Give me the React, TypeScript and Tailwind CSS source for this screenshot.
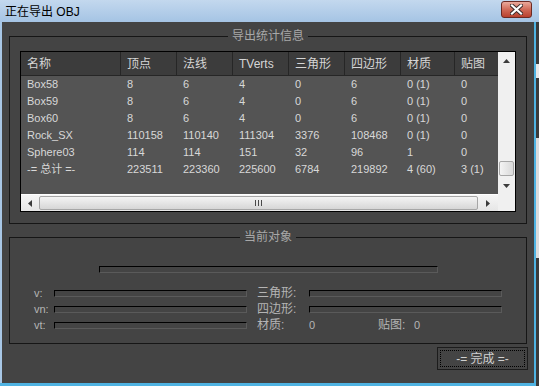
import React from "react";

const FONT = "font-['Liberation_Sans','Noto_Sans_CJK_SC',sans-serif]";

const headers = ["名称", "顶点", "法线", "TVerts", "三角形", "四边形", "材质", "贴图"];
const widths = ["w-[100px]", "w-[56px]", "w-[56px]", "w-[56px]", "w-[56px]", "w-[56px]", "w-[54px]", "w-[43px]"];
const rows = [
  ["Box58", "8", "6", "4", "0", "6", "0 (1)", "0"],
  ["Box59", "8", "6", "4", "0", "6", "0 (1)", "0"],
  ["Box60", "8", "6", "4", "0", "6", "0 (1)", "0"],
  ["Rock_SX", "110158", "110140", "111304", "3376", "108468", "0 (1)", "0"],
  ["Sphere03", "114", "114", "151", "32", "96", "1", "0"],
  ["-= 总计 =-", "223511", "223360", "225600", "6784", "219892", "4 (60)", "3 (1)"],
];

function Tri({ dir }: { dir: "up" | "down" | "left" | "right" }) {
  const pts =
    dir === "up"
      ? "0,4 7,4 3.5,0"
      : dir === "down"
      ? "0,0 7,0 3.5,4"
      : dir === "left"
      ? "4,0 4,7 0,3.5"
      : "0,0 0,7 4,3.5";
  const w = dir === "up" || dir === "down" ? 7 : 4;
  const h = dir === "up" || dir === "down" ? 4 : 7;
  return (
    <svg width={w} height={h} viewBox={`0 0 ${w} ${h}`}>
      <polygon points={pts} fill="#3c3c3c" />
    </svg>
  );
}

function Sunken({ w }: { w: string }) {
  return <div className={`${w} h-[7px] border border-t-black border-l-black border-r-[#5a5a5a] border-b-[#5a5a5a] bg-[#444]`} />;
}

export default function App() {
  return (
    <div className={`w-[539px] h-[386px] overflow-hidden flex ${FONT}`}>
      <div className="w-[536px] h-[386px] flex flex-col shrink-0">
        {/* title bar */}
        <div className="h-[22px] flex items-center bg-gradient-to-b from-[#c3d8ee] to-[#a5c4e4] pl-[5px] pr-[4px]">
          <span className="text-[12px] leading-[16px] text-black mt-[1px]">正在导出 OBJ</span>
          <div className="ml-auto mb-[3px] w-[31px] h-[17px] rounded-[3px] border border-[#6b2a24] bg-gradient-to-b from-[#e9a99c] via-[#d06a58] to-[#b8402e] flex items-center justify-center">
            <svg width="13" height="11" viewBox="0 0 13 11">
              <path d="M2 1.5 L11 9.5 M11 1.5 L2 9.5" stroke="#3a2a2a" strokeWidth="4" strokeLinecap="square" />
              <path d="M2 1.5 L11 9.5 M11 1.5 L2 9.5" stroke="#ffffff" strokeWidth="2.2" strokeLinecap="square" />
            </svg>
          </div>
        </div>
        <div className="flex-1 flex">
          <div className="w-[2px] bg-[#a8c7e6]" />
          {/* body */}
          <div className="flex-1 bg-[#444444] pt-[14px] pl-[7px] flex flex-col">
            {/* group 1 */}
            <div className="w-[518px] h-[188px] border border-[#161616] flex flex-col">
              <div className="-mt-[9px] mx-auto w-fit px-[4px] bg-[#444444] text-[12px] leading-[16px] text-[#a8a8a8]">
                导出统计信息
              </div>
              <div className="ml-[10px] mt-[7px] w-[496px] h-[161px] border border-black flex flex-col">
                <div className="flex h-[142px]">
                  <div className="w-[477px] bg-[#545454] flex flex-col overflow-hidden">
                    <div className="flex h-[24px] bg-[#3c3c3c] border-b border-[#262626] shrink-0">
                      {headers.map((h, i) => (
                        <div
                          key={i}
                          className={`${widths[i]} shrink-0 pl-[6px] flex items-center text-[12px] text-[#d6d6d6] ${i < 7 ? "border-r border-[#262626]" : ""}`}
                        >
                          {h}
                        </div>
                      ))}
                    </div>
                    {rows.map((r, ri) => (
                      <div key={ri} className="flex h-[17px] items-center shrink-0">
                        {r.map((c, i) => (
                          <div
                            key={i}
                            className={`${widths[i]} shrink-0 pl-[6px] ${i < 7 ? "pr-[1px]" : ""} text-[11px] leading-[17px] text-[#d8d8d8] whitespace-nowrap`}
                          >
                            {c}
                          </div>
                        ))}
                      </div>
                    ))}
                  </div>
                  {/* vertical scrollbar */}
                  <div className="w-[17px] bg-[#f0f0f0] flex flex-col">
                    <div className="h-[17px] flex items-center justify-center">
                      <Tri dir="up" />
                    </div>
                    <div className="flex-1 flex flex-col justify-end px-[1px] pb-[1px]">
                      <div className="h-[15px] rounded-[2px] border border-[#a6a6a6] bg-gradient-to-r from-[#f4f4f4] to-[#d9d9d9]" />
                    </div>
                    <div className="h-[17px] flex items-center justify-center">
                      <Tri dir="down" />
                    </div>
                  </div>
                </div>
                {/* horizontal scrollbar */}
                <div className="flex h-[17px]">
                  <div className="w-[477px] flex bg-gradient-to-b from-[#f6f6f6] to-[#e6e6e6] border-t border-white">
                    <div className="w-[18px] flex items-center justify-center">
                      <Tri dir="left" />
                    </div>
                    <div className="w-[439px] py-[1px]">
                      <div className="h-full rounded-[2px] border border-[#a6a6a6] bg-gradient-to-b from-[#f4f4f4] to-[#d6d6d6] flex items-center justify-center">
                        <div className="flex gap-[2px]">
                          <div className="w-[1px] h-[6px] bg-[#4a4a4a]" />
                          <div className="w-[1px] h-[6px] bg-[#4a4a4a]" />
                          <div className="w-[1px] h-[6px] bg-[#4a4a4a]" />
                        </div>
                      </div>
                    </div>
                    <div className="flex-1 flex items-center justify-center">
                      <Tri dir="right" />
                    </div>
                  </div>
                  <div className="w-[17px] bg-[#f0f0f0]" />
                </div>
              </div>
            </div>

            {/* group 2 */}
            <div className="mt-[13px] w-[518px] h-[107px] border border-[#161616] flex flex-col">
              <div className="-mt-[9px] mx-auto w-fit px-[4px] bg-[#444444] text-[12px] leading-[16px] text-[#a8a8a8]">
                当前对象
              </div>
              <div className="mt-[21px] mx-auto">
                <Sunken w="w-[339px]" />
              </div>
              <div className="mt-[12px] flex flex-col">
                {[
                  ["v:", "三角形:"],
                  ["vn:", "四边形:"],
                ].map(([a, b], i) => (
                  <div key={i} className="h-[16px] flex items-center">
                    <div className="w-[44px] pl-[24px] text-[11px] text-[#b4b4b4]">{a}</div>
                    <Sunken w="w-[193px]" />
                    <div className="w-[52px] ml-[10px] text-[12px] text-[#b4b4b4]">{b}</div>
                    <Sunken w="w-[193px]" />
                  </div>
                ))}
                <div className="h-[16px] flex items-center">
                  <div className="w-[44px] pl-[24px] text-[11px] text-[#b4b4b4]">vt:</div>
                  <Sunken w="w-[193px]" />
                  <div className="w-[52px] ml-[10px] text-[12px] text-[#b4b4b4]">材质:</div>
                  <div className="w-[69px] text-[11px] text-[#b4b4b4]">0</div>
                  <div className="w-[36px] text-[12px] text-[#b4b4b4]">贴图:</div>
                  <div className="text-[11px] text-[#b4b4b4]">0</div>
                </div>
              </div>
            </div>

            {/* button */}
            <div className="mt-[3px] w-[518px] flex justify-end">
              <div className="-mr-[1px] w-[91px] h-[23px] border border-[#1c1c1c] bg-[#444444] p-[2px] flex">
                <div className="flex-1 border border-dotted border-black flex items-center justify-center text-[12px] text-[#d0d0d0]">
                  -= 完成 =-
                </div>
              </div>
            </div>
          </div>
          <div className="w-[2px] bg-[#4fb3e2]" />
        </div>
        <div className="h-[3px] bg-[#4fb3e2]" />
      </div>
      {/* background window sliver */}
      <div className="flex-1 flex flex-col bg-[#3a3a3a]">
        <div className="h-[22px] bg-gradient-to-b from-[#c3d8ee] to-[#a5c4e4]" />
        <div className="h-[42px]" />
        <div className="h-[14px] bg-[#e8e8e8]" />
        <div className="h-[60px]" />
        <div className="h-[120px] bg-[#dcdcdc]" />
      </div>
    </div>
  );
}
